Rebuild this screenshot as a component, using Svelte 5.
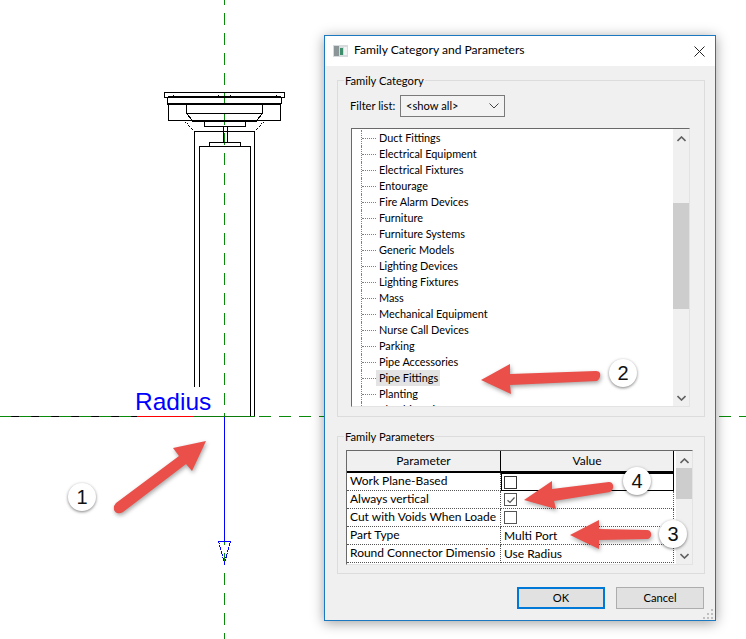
<script>
  const categories = ['Duct Fittings','Electrical Equipment','Electrical Fixtures','Entourage','Fire Alarm Devices','Furniture','Furniture Systems','Generic Models','Lighting Devices','Lighting Fixtures','Mass','Mechanical Equipment','Nurse Call Devices','Parking','Pipe Accessories','Pipe Fittings','Planting','Plumbing Fixtures'];
  const params = [
    { name: 'Work Plane-Based', check: false, focus: true },
    { name: 'Always vertical', check: true },
    { name: 'Cut with Voids When Loade', check: false },
    { name: 'Part Type', value: 'Multi Port' },
    { name: 'Round Connector Dimensio', value: 'Use Radius' }
  ];
  const badges = [
    { x: 82, y: 497, n: '1' },
    { x: 623, y: 373, n: '2' },
    { x: 673, y: 534, n: '3' },
    { x: 637, y: 481, n: '4' }
  ];
  const arrows = [
    'M114 506Q113 511 117 513Q120 514 123 512L186 464L192 471L206 441L173 448L179 456L116 503Z',
    'M481 380L511 394L510 385L597 381Q601 378 600 373Q599 371 596 371L510 374L510 364Z',
    'M524 500L556 509L554 501L610 492Q614 489 613 485Q612 482 609 482L552 489L552 481Z',
    'M570 535L599 549L599 540L648 539Q652 537 651 533Q650 530 647 530L599 529L599 520Z'
  ];
</script>

<div class="canvas">
  <svg class="drawing" width="746" height="639" viewBox="0 0 746 639">
    <path class="black-dash" d="M0 416.5H137" />
    <g class="green">
      <line x1="224.5" y1="-7" x2="224.5" y2="639" stroke-dasharray="12 8" />
      <line x1="-1" y1="416.5" x2="746" y2="416.5" stroke-dasharray="12 8" />
    </g>
    <g class="cad">
      <path d="M164.5 92.5H284.5V97.5H164.5ZM167.5 97.5H281.5V103H167.5ZM168 96.5H281M173.5 95V98M218.5 95V98M230.5 95V98M276.5 95V98" />
      <path d="M168.5 103.5V120.5H280.5V103.5M186.5 103.5V113.5H262.5V103.5M186.5 113.5L192 120M262.5 113.5L257 120" />
      <path class="thick" d="M167 103.5H281M192 120.5H257" />
      <path d="M204.5 120.5V126.5H245.5V120.5M223.5 126.5V142.5M227.5 126.5V142.5M209.5 146.5V142.5H240.5V146.5" />
      <path d="M194.5 387V131.5H254.5V416M199.5 387V146.5H250.5V416" />
      <path class="dotted" d="M184 120.5L194 131M265 120.5L255 131" />
    </g>
    <line class="ref" x1="137" y1="416.5" x2="193" y2="416.5" />
    <line class="dim" x1="193" y1="416.5" x2="255" y2="416.5" />
    <line class="blue" x1="224.5" y1="417" x2="224.5" y2="542" />
    <path class="blue tri" d="M218.5 541.5H230.5L224.5 563Z" />
    <text class="radius" x="135" y="410">Radius</text>
  </svg>

  <section class="dialog">
    <header class="titlebar">
      <svg class="appicon" width="15" height="12" viewBox="0 0 15 12">
        <rect width="15" height="12" fill="#d6dbdd" />
        <rect x="1" y="1" width="5" height="10" fill="#8c9699" />
        <rect x="7" y="3" width="3" height="7" fill="#3c8f6a" />
        <rect x="11" y="2" width="3" height="8" fill="#f1f3f4" />
      </svg>
      <span class="title">Family Category and Parameters</span>
      <svg class="close" width="11" height="11" viewBox="0 0 11 11"><path d="M.5.5L10.5 10.5M10.5.5L.5 10.5" /></svg>
    </header>

    <div class="body">
      <div class="group cat">
        <span class="legend">Family Category</span>
        <div class="filter">
          <span class="flabel">Filter list:</span>
          <div class="combo">
            <span>&lt;show all&gt;</span>
            <svg width="10" height="6" viewBox="0 0 10 6"><path d="M.5.5L5 5L9.5.5" /></svg>
          </div>
        </div>
        <div class="listbox">
          <ul class="tree">
            {#each categories as c}
              <li>
                <i class="conn"></i>
                <span class:sel={c === 'Pipe Fittings'}>{c}</span>
              </li>
            {/each}
          </ul>
          <div class="sb">
            <svg class="chev" width="9" height="6" viewBox="0 0 9 6"><path d="M.5 5L4.5 1L8.5 5" /></svg>
            <div class="thumb list-thumb"></div>
            <svg class="chev end" width="9" height="6" viewBox="0 0 9 6"><path d="M.5 1L4.5 5L8.5 1" /></svg>
          </div>
        </div>
      </div>

      <div class="group par">
        <span class="legend">Family Parameters</span>
        <div class="table">
          <div class="grid">
            <div class="th">Parameter</div>
            <div class="th">Value</div>
            {#each params as p}
              <div class="td name">{p.name}</div>
              <div class="td val" class:focus={p.focus}>
                {#if p.value}
                  {p.value}
                {:else}
                  <span class="box" class:dark={p.focus}>
                    {#if p.check}
                      <svg width="10" height="10" viewBox="0 0 10 10"><path d="M1.5 5.2L4 7.5L8.5 2.5" /></svg>
                    {/if}
                  </span>
                {/if}
              </div>
            {/each}
          </div>
          <div class="sb small">
            <svg class="chev" width="9" height="6" viewBox="0 0 9 6"><path d="M.5 5L4.5 1L8.5 5" /></svg>
            <div class="thumb par-thumb"></div>
            <svg class="chev end" width="9" height="6" viewBox="0 0 9 6"><path d="M.5 1L4.5 5L8.5 1" /></svg>
          </div>
        </div>
      </div>

      <div class="actions">
        <button class="primary">OK</button>
        <button>Cancel</button>
      </div>
    </div>
    <svg class="grip" width="11" height="10" viewBox="0 0 11 10">
      <path d="M8 0h2v2H8zM4 4h2v2H4zM8 4h2v2H8zM0 8h2v2H0zM4 8h2v2H4zM8 8h2v2H8z" />
    </svg>
  </section>

  <svg class="notes" width="746" height="639" viewBox="0 0 746 639">
    <g class="arrows">
      {#each arrows as a}
        <path d={a} />
      {/each}
    </g>
    {#each badges as b}
      <g class="badge">
        <circle cx={b.x} cy={b.y} r="14" />
        <text x={b.x} y={b.y + 7}>{b.n}</text>
      </g>
    {/each}
  </svg>
</div>

<style>
  :global(body) { margin: 0; background: #fff; }
  .canvas {
    position: relative;
    width: 746px;
    height: 639px;
    overflow: hidden;
    background: #fff;
    font: 12px/16px Lato, "Open Sans", sans-serif;
    color: #000;
  }
  .drawing, .notes { position: absolute; left: 0; top: 0; }
  .notes { pointer-events: none; }
  .green line { stroke: #0a8a0a; stroke-width: 1; shape-rendering: crispEdges; }
  .cad { fill: none; stroke: #000; stroke-width: 1; shape-rendering: crispEdges; }
  .cad .thick { stroke-width: 2; }
  .cad .dotted { stroke-dasharray: 1 1; }
  .black-dash { stroke: #000; stroke-width: 1; shape-rendering: crispEdges; }
  .ref { stroke: #f00; stroke-width: 1; shape-rendering: crispEdges; }
  .dim { stroke: #0a7a0a; stroke-width: 1; shape-rendering: crispEdges; }
  .blue { stroke: #0000ff; stroke-width: 1; fill: none; }
  .tri { shape-rendering: crispEdges; stroke-dasharray: 5 1; }
  .radius { font: 24.5px "Liberation Sans", Arial, sans-serif; fill: #0000ff; }

  .dialog {
    position: absolute;
    left: 324px;
    top: 35px;
    width: 390px;
    height: 584px;
    border: 1px solid #1c79c0;
    background: #f0f0f0;
    box-shadow: 0 2px 12px rgba(0, 0, 0, .38);
    display: flex;
    flex-direction: column;
  }
  .titlebar {
    height: 30px;
    background: #fff;
    display: flex;
    align-items: center;
    padding: 0 10px 0 8px;
    flex: none;
  }
  .title { margin: -2px 0 0 6px; font-size: 12.1px; flex: 1; }
  .close path { fill: none; stroke: #222; stroke-width: 1; }
  .body { padding: 14px 10px 0 12px; flex: 1; display: flex; flex-direction: column; }
  .group {
    position: relative;
    border: 1px solid #dcdcdc;
    box-sizing: border-box;
    width: 368px;
    flex: none;
  }
  .legend {
    position: absolute;
    left: 6px;
    top: -8px;
    padding: 0 1px;
    background: #f0f0f0;
    line-height: 16px;
    font-size: 11.2px;
  }
  .cat { height: 337px; padding: 14px 0 0 13px; }
  .par { height: 138px; margin-top: 19px; padding: 13px 0 0 8px; }
  .filter { display: flex; align-items: center; margin-left: -1px; height: 22px; font-size: 11.2px; }
  .flabel { width: 50px; flex: none; }
  .combo {
    box-sizing: border-box;
    width: 105px;
    height: 22px;
    border: 1px solid #7a7a7a;
    display: flex;
    align-items: center;
    justify-content: space-between;
    padding: 0 5px;
    background: #f3f3f3;
  }
  .combo path { fill: none; stroke: #444; }
  .listbox {
    box-sizing: border-box;
    width: 339px;
    height: 279px;
    margin-top: 11px;
    background: #fff;
    border: 1px solid #e3e3e3;
    border-top-color: #696969;
    border-left-color: #696969;
    display: flex;
    overflow: hidden;
  }
  .tree {
    list-style: none;
    margin: 0;
    padding: 1px 0 0 9px;
    flex: 1;
    overflow: hidden;
    font-size: 10.9px;
  }
  .tree li { display: flex; height: 16px; align-items: stretch; }
  .conn {
    width: 15px;
    border-left: 1px dotted #808080;
    position: relative;
    flex: none;
    box-sizing: border-box;
  }
  .conn::after {
    content: "";
    position: absolute;
    left: 0;
    right: 0;
    top: 8px;
    border-top: 1px dotted #808080;
  }
  .tree span { padding: 0 2px 0 3px; white-space: nowrap; }
  .tree span.sel { background: #e3e3e3; }
  .sb {
    width: 16px;
    flex: none;
    background: #f0f0f0;
    display: flex;
    flex-direction: column;
    align-items: center;
  }
  .chev { fill: none; flex: none; margin-top: 7px; }
  .chev path { fill: none; stroke: #606060; stroke-width: 1.6; }
  .chev.end { margin-top: auto; margin-bottom: 5px; }
  .thumb { width: 100%; background: #cdcdcd; flex: none; }
  .list-thumb { height: 106px; margin-top: 61px; }
  .par-thumb { height: 31px; margin-top: 4px; }

  .table {
    box-sizing: border-box;
    width: 347px;
    height: 115px;
    background: #fff;
    border: 1px solid #e3e3e3;
    border-top: 1px solid #696969;
    border-left: 1px solid #696969;
    display: flex;
  }
  .grid {
    width: 327px;
    flex: none;
    display: grid;
    grid-template-columns: 154px 173px;
    grid-template-rows: 22px repeat(5, 18px);
    align-content: start;
  }
  .th {
    background: #f0f0f0;
    text-align: center;
    line-height: 20px;
    border-right: 1px solid #000;
    border-bottom: 2px solid #000;
  }
  .td {
    box-sizing: border-box;
    border-bottom: 1px dotted #555;
    border-right: 1px dotted #555;
    padding-left: 3px;
    line-height: 15px;
    overflow: hidden;
    white-space: nowrap;
  }
  .val { padding-left: 3px; display: flex; align-items: center; }
  .val.focus { border: 1px solid #000; padding-left: 2px; }
  .box {
    box-sizing: border-box;
    width: 13px;
    height: 13px;
    border: 1px solid #555;
    background: #fff;
    display: block;
  }
  .box.dark { border-color: #333; }
  .box svg { display: block; margin: 0.5px; }
  .box path { fill: none; stroke: #555; stroke-width: 1.2; }
  .small { margin-left: 2px; width: 16px; }

  .actions { display: flex; justify-content: flex-end; gap: 11px; margin-top: 13px; margin-right: 1px; }
  .actions button {
    box-sizing: border-box;
    width: 88px;
    height: 22px;
    padding: 0;
    font: inherit;
    font-size: 11.2px;
    color: #000;
    background: #e1e1e1;
    border: 1px solid #adadad;
    border-radius: 0;
  }
  .actions .primary { border: 2px solid #0078d7; }
  .grip { position: absolute; right: 1px; bottom: 1px; fill: #c0c0c0; }

  .arrows path {
    fill: #ea4f49;
    filter: drop-shadow(1px 2px 2px rgba(0, 0, 0, .35));
  }
  .badge circle {
    fill: #fff;
    filter: drop-shadow(0 1px 1.5px rgba(0, 0, 0, .5));
  }
  .badge text {
    font: 20px "Liberation Sans", Arial, sans-serif;
    text-anchor: middle;
    fill: #111;
  }
</style>
